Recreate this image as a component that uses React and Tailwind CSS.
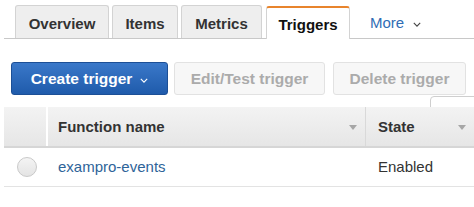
import React from 'react';

const tabs = [
  { label: 'Overview', width: 'w-[94px]' },
  { label: 'Items', width: 'w-[66px]' },
  { label: 'Metrics', width: 'w-[81px]' },
];

function Chevron({ className = '' }) {
  return (
    <svg viewBox="0 0 10 6" className={className} fill="none" stroke="currentColor" strokeWidth="1.4">
      <path d="M1 1l4 4 4-4" />
    </svg>
  );
}

function SortCaret() {
  return (
    <svg viewBox="0 0 8 5" className="h-[5px] w-[8px] text-[#a6a6a6]" fill="currentColor">
      <path d="M0 0h8L4 5z" />
    </svg>
  );
}

export default function App() {
  return (
    <div
      className="relative h-[207px] w-[474px] overflow-hidden bg-white text-[15px] text-[#333]"
      style={{ fontFamily: '"Liberation Sans", Arial, sans-serif' }}
    >
      {/* tab strip */}
      <div className="ml-[4px] flex h-[39px] items-end border-b border-[#c8c8c8] pl-[11px]">
        {tabs.map((tab) => (
          <div
            key={tab.label}
            className={`${tab.width} mr-[3px] flex h-[33px] items-center justify-center rounded-t-[3px] border border-b-0 border-[#d3d3d3] bg-[#eeeeee] pt-[4px] font-bold text-[#333]`}
          >
            {tab.label}
          </div>
        ))}
        <div className="relative -mb-px ml-px flex h-[33px] w-[84px] items-center justify-center rounded-t-[3px] border border-b-0 border-[#d3d3d3] border-t-2 border-t-[#e8842c] bg-white pt-[4px] font-bold text-[#111]">
          Triggers
        </div>
        <div className="flex h-[33px] items-center pl-[20px] pt-[4px] text-[#2f6db5]">
          More
          <Chevron className="ml-[9px] mt-[2px] h-[5px] w-[8px] text-[#444]" />
        </div>
      </div>

      {/* action buttons */}
      <div className="mt-[23px] flex items-center pl-[11px] text-[15.5px]">
        <div className="flex h-[33px] w-[157px] items-center justify-center rounded-[3px] border border-[#1c4f96] bg-gradient-to-b from-[#3a78c9] to-[#1f5bab] pt-px font-bold text-white">
          Create trigger
          <Chevron className="ml-[8px] mt-[2px] h-[5px] w-[8px] text-white" />
        </div>
        <div className="ml-[6px] flex h-[33px] w-[151px] items-center justify-center rounded-[3px] border border-[#e2e2e2] bg-[#f7f7f7] pt-px font-bold text-[#ababab]">
          Edit/Test trigger
        </div>
        <div className="ml-[8px] flex h-[33px] w-[133px] items-center justify-center rounded-[3px] border border-[#e2e2e2] bg-[#f7f7f7] pt-px font-bold text-[#ababab]">
          Delete trigger
        </div>
      </div>

      {/* peeking box behind table */}
      <div className="absolute left-[430px] top-[96px] h-[14px] w-[60px] rounded-tl-[4px] border border-[#cfcfcf] bg-white" />

      {/* table */}
      <div className="relative ml-[4px] mt-[12px]">
        <div className="flex h-[41px] border-b-2 border-[#d6d6d6] bg-gradient-to-b from-[#f3f3f3] to-[#e6e6e6]">
          <div className="w-[44px] border-r-2 border-white" />
          <div className="flex flex-1 items-center justify-between border-r border-[#d9d9d9] pl-[10px] pr-[8px] pt-px font-bold text-[#333]">
            Function name
            <SortCaret />
          </div>
          <div className="flex w-[108px] items-center justify-between pl-[12px] pr-[8px] pt-px font-bold text-[#333]">
            State
            <SortCaret />
          </div>
        </div>
        <div className="flex h-[39px] items-center border-b border-[#e3e3e3]">
          <div className="flex w-[46px] justify-center">
            <div className="h-[20px] w-[20px] rounded-full border border-[#c9c9c9] bg-gradient-to-b from-[#f4f4f4] to-[#e4e4e4]" />
          </div>
          <div className="flex-1 pl-[8px] pt-px text-[#2e6499]">exampro-events</div>
          <div className="w-[108px] pl-[12px] pt-px text-[#333]">Enabled</div>
        </div>
      </div>
    </div>
  );
}
